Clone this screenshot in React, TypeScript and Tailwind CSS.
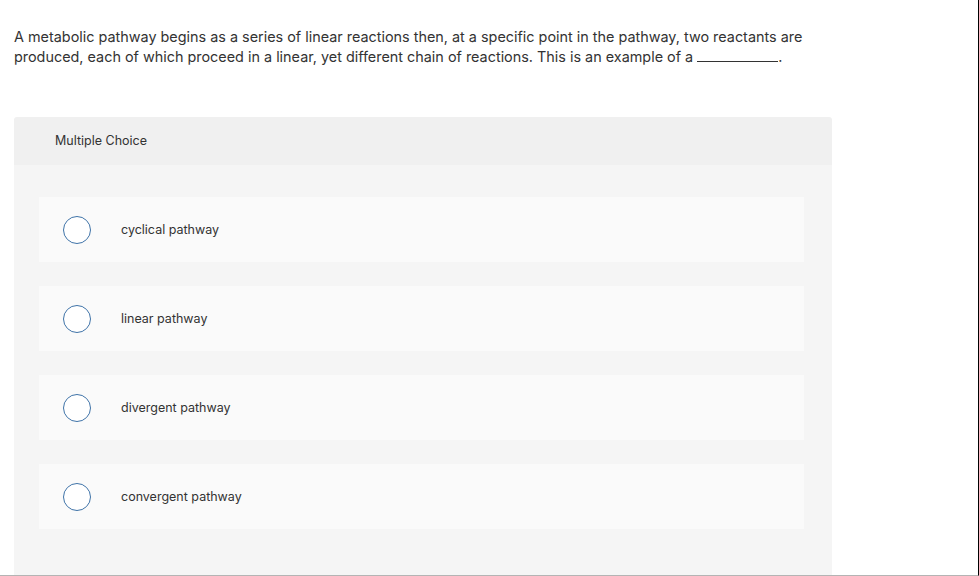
const options = ['cyclical pathway', 'linear pathway', 'divergent pathway', 'convergent pathway']

export default function App() {
  return (
    <div
      className="w-[979px] h-[576px] overflow-hidden bg-white border-r border-r-black border-b border-b-[#b4b4b4] text-[#333]"
      style={{ fontFamily: 'Inter, "Open Sans", sans-serif' }}
    >
      {/* Question */}
      <p className="pl-[14px] pt-[27px] text-[14.4px] leading-[20px]">
        A metabolic pathway begins as a series of linear reactions then, at a specific point in the pathway, two reactants are
        <br />
        produced, each of which proceed in a linear, yet different chain of reactions. This is an example of a{' '}
        <span className="inline-block w-[81px] border-b border-[#333] align-baseline" />.
      </p>

      {/* Card */}
      <div className="ml-[14px] mt-[50px] w-[818px] rounded-t-[3px] overflow-hidden">
        <div className="h-[48px] bg-[#f0f0f0] flex items-center pl-[41px] text-[12.5px]">Multiple Choice</div>
        <div className="bg-[#f5f5f5] pt-[32px] pl-[25px] pr-[28px] pb-[80px] flex flex-col gap-[24px]">
          {options.map((o) => (
            <div key={o} className="h-[65px] bg-[#fafafa] flex items-center pl-[24px]">
              <span className="w-[28px] h-[28px] rounded-full border-[1.5px] border-[#3f73a8] bg-white shrink-0" />
              <span className="ml-[30px] text-[12.5px] pt-[2px]">{o}</span>
            </div>
          ))}
        </div>
      </div>
    </div>
  )
}
